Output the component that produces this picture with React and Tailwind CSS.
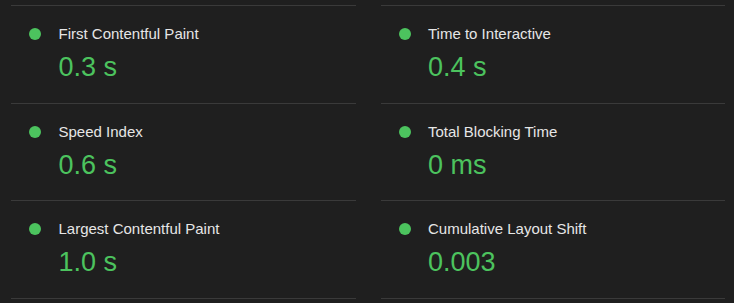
const metrics = [
  { label: "First Contentful Paint", value: "0.3 s" },
  { label: "Time to Interactive", value: "0.4 s" },
  { label: "Speed Index", value: "0.6 s" },
  { label: "Total Blocking Time", value: "0 ms" },
  { label: "Largest Contentful Paint", value: "1.0 s" },
  { label: "Cumulative Layout Shift", value: "0.003" },
];

function Metric({ label, value, last }) {
  return (
    <div
      className={
        "border-t border-[#3a3a3a] pt-[18px] pb-[19.5px] pl-[18px] " +
        (last ? "border-b" : "")
      }
    >
      <div className="flex items-center h-5">
        <span className="w-3 h-3 rounded-full bg-[#4cc35e] shrink-0" />
        <span className="ml-[17.5px] text-[15px] leading-5 text-[#e6e6e6]">
          {label}
        </span>
      </div>
      <div className="mt-[7px] pl-[29.5px] text-[27px] leading-8 text-[#4cc35e]">
        {value}
      </div>
    </div>
  );
}

export default function App() {
  return (
    <div
      className="w-[734px] h-[303px] bg-[#1f1f1f] pt-[5px] pl-[11px] pr-[9px] overflow-hidden"
      style={{ fontFamily: '"Liberation Sans", Arial, sans-serif' }}
    >
      <div className="grid grid-cols-2 gap-x-[25px]">
        {metrics.map((m, i) => (
          <Metric key={m.label} {...m} last={i >= 4} />
        ))}
      </div>
    </div>
  );
}
